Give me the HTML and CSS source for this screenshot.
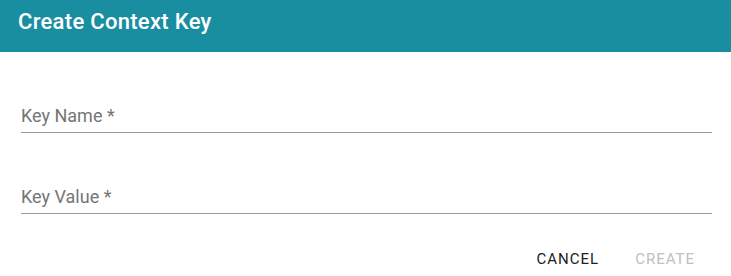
FILE: index.html
```html
<!DOCTYPE html>
<html lang="en">
<head>
    <meta charset="UTF-8">
    <meta name="viewport" content="width=device-width, initial-scale=1.0">
    <title>Create Context Key</title>
    <link rel="stylesheet" href="styles.css">
</head>
<body>
    <div class="dialog">
        <h1 class="dialog-title">Create Context Key</h1>

        <form class="dialog-content">
            <div class="field">
                <label for="keyName">Key Name *</label>
                <input type="text" id="keyName" name="keyName">
            </div>

            <div class="field">
                <label for="keyValue">Key Value *</label>
                <input type="text" id="keyValue" name="keyValue">
            </div>

            <div class="actions">
                <button type="button" class="btn">Cancel</button>
                <button type="submit" class="btn" disabled>Create</button>
            </div>
        </form>
    </div>
</body>
</html>
```

FILE: styles.css
```css
body { margin: 0; font-family: Roboto, "Liberation Sans", Arial, sans-serif; background: #fff; }
.dialog { width: 731px; }
.dialog-title { margin: 0; height: 52px; box-sizing: border-box; padding: 8px 18px 0; background-color: #1a8ea1; color: #fff; font-size: 22px; font-weight: 500; line-height: 27px; letter-spacing: 0.3px; }
.dialog-content { padding: 0 19px 0 21px; }
.field { position: relative; margin-top: 53px; padding-bottom: 5px; border-bottom: 1px solid #9a9a9a; }
.field label { display: block; font-size: 18px; line-height: 22px; color: #757575; }
.field input { position: absolute; left: 0; right: 0; bottom: 0; height: 24px; border: none; outline: none; background: transparent; font: inherit; font-size: 18px; padding: 0; }
.actions { display: flex; justify-content: flex-end; gap: 4px; margin-top: 27px; margin-right: 1px; }
.btn { padding: 8px 16px; border: none; background: transparent; font-family: inherit; font-size: 15px; line-height: 20px; letter-spacing: 1px; text-transform: uppercase; color: #212121; cursor: pointer; }
.btn:disabled { color: #c0c0c0; cursor: default; }
```
